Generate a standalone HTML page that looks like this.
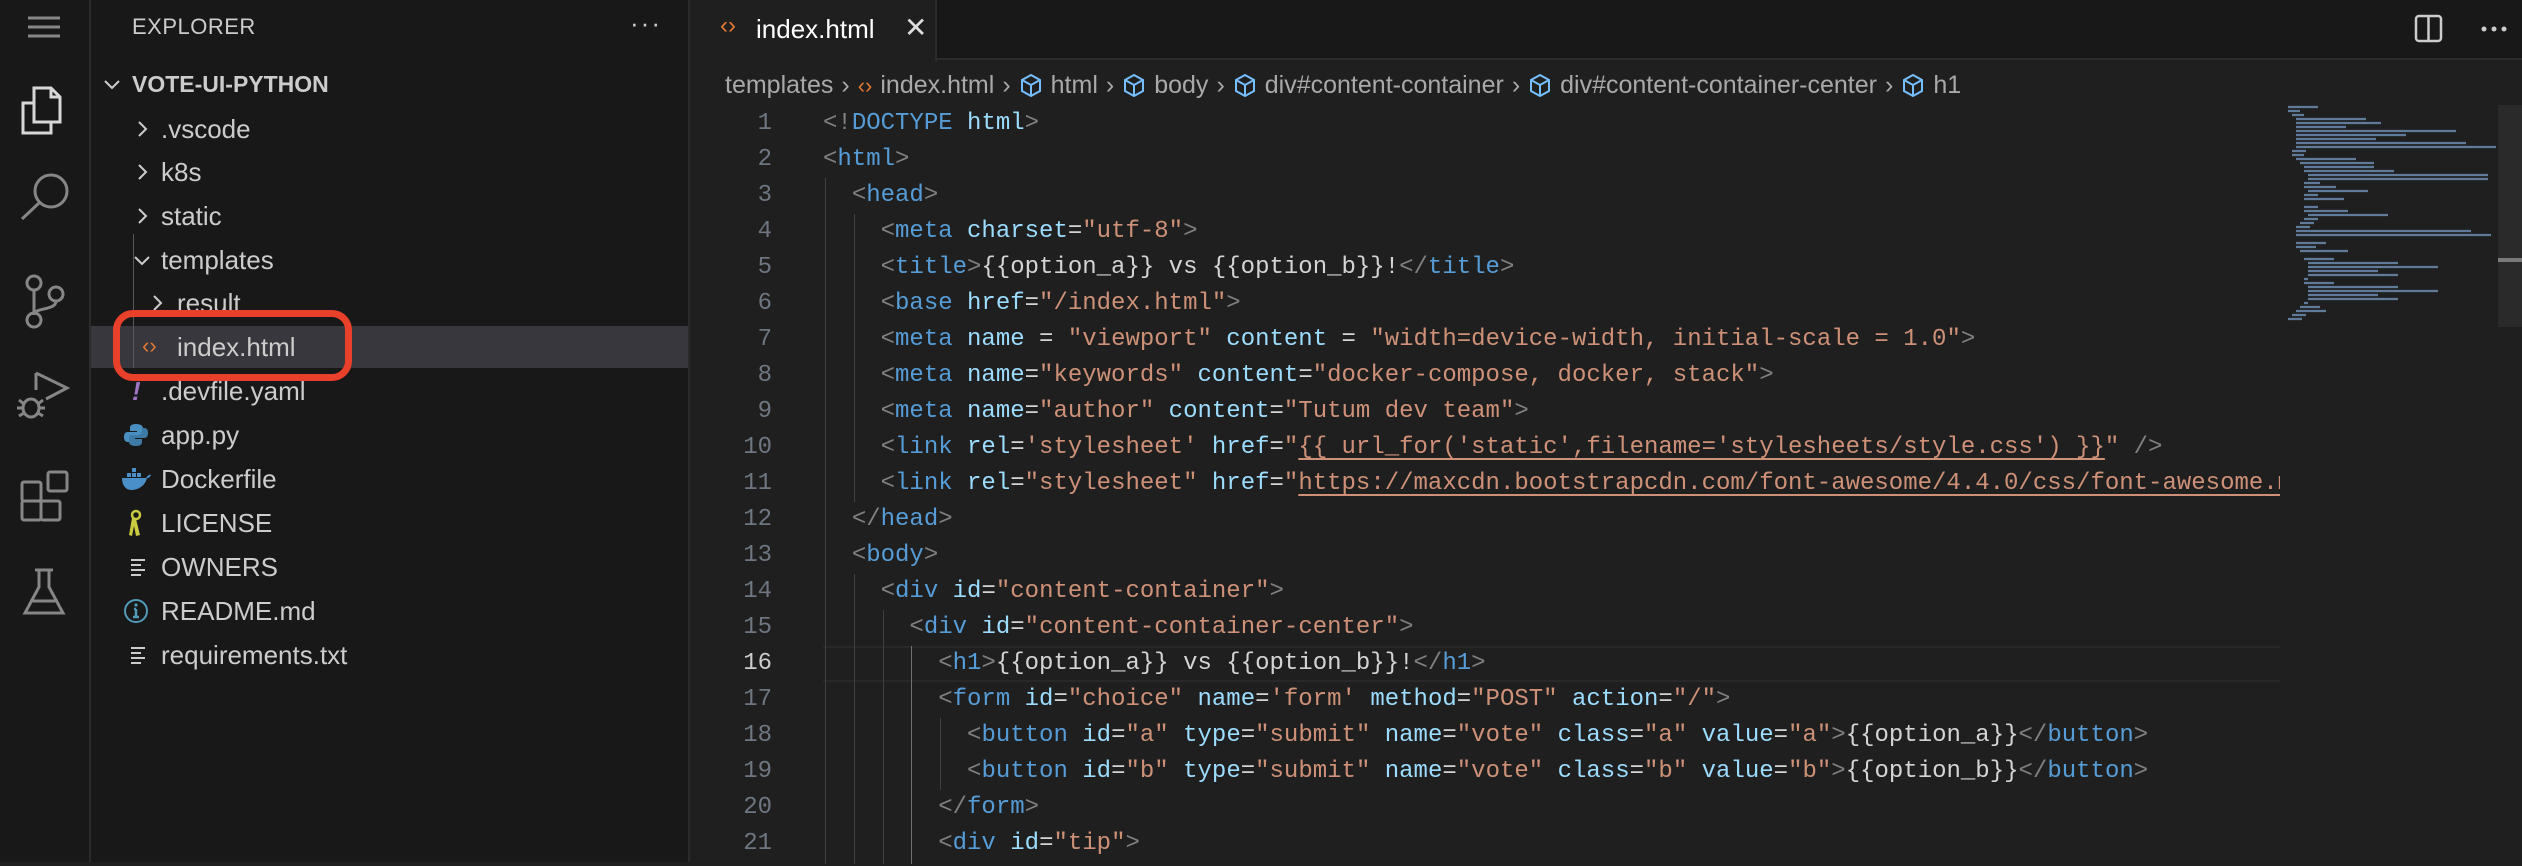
<!DOCTYPE html>
<html><head><meta charset="utf-8">
<style>
*{margin:0;padding:0;box-sizing:border-box}
body{width:2522px;height:862px;overflow:hidden;background:#1f1f1f;font-family:"Liberation Sans",sans-serif;position:relative}
.abs{position:absolute}
#act{left:0;top:0;width:91px;height:862px;background:#181818;border-right:2px solid #2b2b2b}
#side{left:91px;top:0;width:599px;height:862px;background:#181818;border-right:2px solid #2b2b2b}
.row{position:absolute;left:0;width:597px;height:44px;line-height:44px;font-size:26px;color:#cccccc;white-space:nowrap}
.row .t{position:absolute}
.chev{position:absolute;top:12px;width:20px;height:20px}
#tabs{left:692px;top:0;width:1830px;height:60px;background:#181818;border-bottom:2px solid #2b2b2b}
#tab{left:692px;top:0;width:245px;height:62px;background:#1f1f1f;border-right:2px solid #2b2b2b}
#code{left:823px;top:106px;width:1457px;height:760px;overflow:hidden;font-family:"Liberation Mono",monospace;font-size:24px;line-height:36px;white-space:pre;color:#d4d4d4}
#nums{left:700px;top:106px;width:72px;font-family:"Liberation Mono",monospace;font-size:24px;line-height:36px;text-align:right;color:#6e7681}
.p{color:#808080}.n{color:#569cd6}.a{color:#9cdcfe}.s{color:#ce9178}.u{text-decoration:underline;text-underline-offset:5px}
.g{position:absolute;width:1px;background:#404040}
</style></head><body>
<div class="abs" id="act">
<svg width="91" height="640" viewBox="0 0 91 640" fill="none" stroke="#868686" stroke-width="3">
<path d="M28 18h32M28 27h32M28 36h32"/>
<g stroke="#d7d7d7"><path d="M34 88h17l9 9v25h-26z"/><path d="M51 88v9h9"/><path d="M34 103h-11v30h28v-11"/></g>
<circle cx="51" cy="191" r="16"/><path d="M39 203l-17 16"/>
<circle cx="34" cy="283" r="7"/><circle cx="34" cy="320" r="7"/><circle cx="56" cy="294" r="7"/><path d="M34 290v23M56 301c0 10-22 6-22 14"/>
<path d="M36 373l31 15-21 11M36 373v17"/><ellipse cx="31" cy="408" rx="8" ry="9"/><path d="M19 400l5 4M19 416l5-3M43 400l-5 4M43 416l-5-3M17 408h6M39 408h6"/>
<rect x="22" y="482" width="19" height="19" rx="2"/><rect x="22" y="501" width="19" height="19" rx="2"/><rect x="41" y="501" width="19" height="19" rx="2"/><rect x="48" y="472" width="19" height="19" rx="2"/>
<path d="M35 570h18M39 570v17l-14 26h38l-14-26v-17M30 601h28"/>
</svg>
</div>
<div class="abs" id="side">
<div class="abs" style="left:41px;top:14px;font-size:22px;color:#cccccc;letter-spacing:0.5px">EXPLORER</div>
<div class="abs" style="left:539px;top:8px;font-size:26px;color:#ccc;letter-spacing:2px">···</div>
<div class="row" style="top:62px;font-weight:bold;font-size:23px"><svg class="chev" style="left:11px" viewBox="0 0 20 20"><path d="M3 7l7 7 7-7" stroke="#ccc" stroke-width="2" fill="none"/></svg><span class="t" style="left:41px">VOTE-UI-PYTHON</span></div>
<div class="row" style="top:107px"><svg class="chev" style="left:41px" viewBox="0 0 20 20"><path d="M7 3l7 7-7 7" stroke="#ccc" stroke-width="2" fill="none"/></svg><span class="t" style="left:70px">.vscode</span></div>
<div class="row" style="top:150px"><svg class="chev" style="left:41px" viewBox="0 0 20 20"><path d="M7 3l7 7-7 7" stroke="#ccc" stroke-width="2" fill="none"/></svg><span class="t" style="left:70px">k8s</span></div>
<div class="row" style="top:194px"><svg class="chev" style="left:41px" viewBox="0 0 20 20"><path d="M7 3l7 7-7 7" stroke="#ccc" stroke-width="2" fill="none"/></svg><span class="t" style="left:70px">static</span></div>
<div class="row" style="top:238px"><svg class="chev" style="left:41px" viewBox="0 0 20 20"><path d="M3 7l7 7 7-7" stroke="#ccc" stroke-width="2" fill="none"/></svg><span class="t" style="left:70px">templates</span></div>
<div class="row" style="top:281px"><svg class="chev" style="left:56px" viewBox="0 0 20 20"><path d="M7 3l7 7-7 7" stroke="#ccc" stroke-width="2" fill="none"/></svg><span class="t" style="left:86px">result</span></div>
<div class="row" style="top:326px;background:#37373d;height:42px;line-height:42px"><span class="t" style="left:51px;color:#e37933;font-size:22px;top:-1px">‹›</span><span class="t" style="left:86px">index.html</span></div>
<div class="abs" style="left:42px;top:234px;width:1px;height:134px;background:#585858"></div>
<div class="row" style="top:369px"><span class="t" style="left:41px;color:#a074c4;font-style:italic;font-weight:bold">!</span><span class="t" style="left:70px">.devfile.yaml</span></div>
<div class="row" style="top:413px"><svg class="t" style="left:33px;top:10px" width="24" height="24" viewBox="0 0 24 24"><path d="M12 1c-5 0-6 2-6 4v3h7v1H4c-3 0-4 2-4 5s1 5 4 5h2v-3c0-2 2-4 4-4h6c2 0 3-1 3-3V5c0-2-2-4-7-4z" fill="#4a8fc1"/><path d="M12 23c5 0 6-2 6-4v-3h-7v-1h9c3 0 4-2 4-5s-1-5-4-5h-2v3c0 2-2 4-4 4H8c-2 0-3 1-3 3v4c0 2 2 4 7 4z" fill="#3d7aa6"/></svg><span class="t" style="left:70px">app.py</span></div>
<div class="row" style="top:457px"><svg class="t" style="left:30px;top:10px" width="30" height="24" viewBox="0 0 30 24"><path d="M1 11h24c2-3 4-4 5-3-1 2-2 3-4 3-2 8-9 12-16 12C4 23 1 17 1 11z" fill="#4b8fc9"/><rect x="6" y="6" width="4" height="4" fill="#4b8fc9"/><rect x="11" y="6" width="4" height="4" fill="#4b8fc9"/><rect x="16" y="6" width="4" height="4" fill="#4b8fc9"/><rect x="11" y="1" width="4" height="4" fill="#4b8fc9"/></svg><span class="t" style="left:70px">Dockerfile</span></div>
<div class="row" style="top:501px"><svg class="t" style="left:36px;top:8px" width="18" height="28" viewBox="0 0 18 28"><circle cx="9" cy="6" r="4" stroke="#cbcb41" stroke-width="2.5" fill="none"/><path d="M5 9l-3 17 3 1 2-10 2 10 4-1-4-16" fill="#cbcb41"/></svg><span class="t" style="left:70px">LICENSE</span></div>
<div class="row" style="top:545px"><svg class="t" style="left:40px;top:13px" width="16" height="18"><path d="M0 2h14M0 7h10M0 12h14M0 17h10" stroke="#ccc" stroke-width="2"/></svg><span class="t" style="left:70px">OWNERS</span></div>
<div class="row" style="top:589px"><svg class="t" style="left:32px;top:9px" width="26" height="26"><circle cx="13" cy="13" r="11" stroke="#519aba" stroke-width="2" fill="none"/><path d="M13 11v8M10 19h6M11 11h2" stroke="#519aba" stroke-width="2.5"/><circle cx="13" cy="7" r="1.6" fill="#519aba"/></svg><span class="t" style="left:70px">README.md</span></div>
<div class="row" style="top:633px"><svg class="t" style="left:40px;top:13px" width="16" height="18"><path d="M0 2h14M0 7h10M0 12h14M0 17h10" stroke="#ccc" stroke-width="2"/></svg><span class="t" style="left:70px">requirements.txt</span></div>
</div>
<div class="abs" style="left:113px;top:310px;width:239px;height:71px;border:7px solid #e8402a;border-radius:20px"></div>

<div class="abs" id="tabs"></div>
<div class="abs" id="tab">
<span class="abs" style="left:28px;top:12px;color:#e37933;font-size:24px">‹›</span>
<span class="abs" style="left:64px;top:14px;color:#ffffff;font-size:26px">index.html</span>
<span class="abs" style="left:212px;top:11px;color:#ddd;font-size:28px">✕</span>
</div>
<svg class="abs" style="left:2414px;top:14px" width="100" height="30"><rect x="2" y="2" width="25" height="25" rx="3" stroke="#ccc" stroke-width="2.5" fill="none"/><path d="M14.5 2v25" stroke="#ccc" stroke-width="2.5"/><circle cx="70" cy="15" r="2.5" fill="#ccc"/><circle cx="80" cy="15" r="2.5" fill="#ccc"/><circle cx="90" cy="15" r="2.5" fill="#ccc"/></svg>

<div class="abs" style="left:725px;top:71px;font-size:25px;color:#a9a9a9;white-space:nowrap;display:flex;align-items:center;gap:8px">
<span>templates</span><span class="c">›</span><span style="color:#e37933;font-size:22px">‹›</span><span>index.html</span><span>›</span>
<svg width="24" height="26" viewBox="0 0 24 26"><path d="M12 2l9 5v11l-9 5-9-5V7zM3 7l9 5 9-5M12 12v11" stroke="#75beff" stroke-width="2" fill="none"/></svg><span>html</span><span>›</span>
<svg width="24" height="26" viewBox="0 0 24 26"><path d="M12 2l9 5v11l-9 5-9-5V7zM3 7l9 5 9-5M12 12v11" stroke="#75beff" stroke-width="2" fill="none"/></svg><span>body</span><span>›</span>
<svg width="24" height="26" viewBox="0 0 24 26"><path d="M12 2l9 5v11l-9 5-9-5V7zM3 7l9 5 9-5M12 12v11" stroke="#75beff" stroke-width="2" fill="none"/></svg><span>div#content-container</span><span>›</span>
<svg width="24" height="26" viewBox="0 0 24 26"><path d="M12 2l9 5v11l-9 5-9-5V7zM3 7l9 5 9-5M12 12v11" stroke="#75beff" stroke-width="2" fill="none"/></svg><span>div#content-container-center</span><span>›</span>
<svg width="24" height="26" viewBox="0 0 24 26"><path d="M12 2l9 5v11l-9 5-9-5V7zM3 7l9 5 9-5M12 12v11" stroke="#75beff" stroke-width="2" fill="none"/></svg><span>h1</span>
</div>

<div class="abs" style="left:823px;top:646px;width:1457px;height:36px;border-top:2px solid #282828;border-bottom:2px solid #282828"></div>
<div class="abs" id="nums">1<br>2<br>3<br>4<br>5<br>6<br>7<br>8<br>9<br>10<br>11<br>12<br>13<br>14<br>15<br><span style="color:#cccccc">16</span><br>17<br>18<br>19<br>20<br>21</div>

<div class="g" style="left:825px;top:178px;height:686px"></div>
<div class="g" style="left:854px;top:214px;height:288px"></div>
<div class="g" style="left:854px;top:574px;height:290px"></div>
<div class="g" style="left:883px;top:610px;height:254px"></div>
<div class="g" style="left:911px;top:646px;height:218px;background:#707070"></div>
<div class="g" style="left:940px;top:718px;height:72px"></div>

<div class="abs" id="code"><span class="p">&lt;!</span><span class="n">DOCTYPE</span> <span class="a">html</span><span class="p">&gt;</span>
<span class="p">&lt;</span><span class="n">html</span><span class="p">&gt;</span>
  <span class="p">&lt;</span><span class="n">head</span><span class="p">&gt;</span>
    <span class="p">&lt;</span><span class="n">meta</span> <span class="a">charset</span>=<span class="s">"utf-8"</span><span class="p">&gt;</span>
    <span class="p">&lt;</span><span class="n">title</span><span class="p">&gt;</span>{{option_a}} vs {{option_b}}!<span class="p">&lt;/</span><span class="n">title</span><span class="p">&gt;</span>
    <span class="p">&lt;</span><span class="n">base</span> <span class="a">href</span>=<span class="s">"/index.html"</span><span class="p">&gt;</span>
    <span class="p">&lt;</span><span class="n">meta</span> <span class="a">name</span> = <span class="s">"viewport"</span> <span class="a">content</span> = <span class="s">"width=device-width, initial-scale = 1.0"</span><span class="p">&gt;</span>
    <span class="p">&lt;</span><span class="n">meta</span> <span class="a">name</span>=<span class="s">"keywords"</span> <span class="a">content</span>=<span class="s">"docker-compose, docker, stack"</span><span class="p">&gt;</span>
    <span class="p">&lt;</span><span class="n">meta</span> <span class="a">name</span>=<span class="s">"author"</span> <span class="a">content</span>=<span class="s">"Tutum dev team"</span><span class="p">&gt;</span>
    <span class="p">&lt;</span><span class="n">link</span> <span class="a">rel</span>=<span class="s">'stylesheet'</span> <span class="a">href</span>=<span class="s">"<span class="u">{{ url_for('static',filename='stylesheets/style.css') }}</span>"</span> <span class="p">/&gt;</span>
    <span class="p">&lt;</span><span class="n">link</span> <span class="a">rel</span>=<span class="s">"stylesheet"</span> <span class="a">href</span>=<span class="s">"<span class="u">https://maxcdn.bootstrapcdn.com/font-awesome/4.4.0/css/font-awesome.min.css</span>"</span><span class="p">&gt;</span>
  <span class="p">&lt;/</span><span class="n">head</span><span class="p">&gt;</span>
  <span class="p">&lt;</span><span class="n">body</span><span class="p">&gt;</span>
    <span class="p">&lt;</span><span class="n">div</span> <span class="a">id</span>=<span class="s">"content-container"</span><span class="p">&gt;</span>
      <span class="p">&lt;</span><span class="n">div</span> <span class="a">id</span>=<span class="s">"content-container-center"</span><span class="p">&gt;</span>
        <span class="p">&lt;</span><span class="n">h1</span><span class="p">&gt;</span>{{option_a}} vs {{option_b}}!<span class="p">&lt;/</span><span class="n">h1</span><span class="p">&gt;</span>
        <span class="p">&lt;</span><span class="n">form</span> <span class="a">id</span>=<span class="s">"choice"</span> <span class="a">name</span>=<span class="s">'form'</span> <span class="a">method</span>=<span class="s">"POST"</span> <span class="a">action</span>=<span class="s">"/"</span><span class="p">&gt;</span>
          <span class="p">&lt;</span><span class="n">button</span> <span class="a">id</span>=<span class="s">"a"</span> <span class="a">type</span>=<span class="s">"submit"</span> <span class="a">name</span>=<span class="s">"vote"</span> <span class="a">class</span>=<span class="s">"a"</span> <span class="a">value</span>=<span class="s">"a"</span><span class="p">&gt;</span>{{option_a}}<span class="p">&lt;/</span><span class="n">button</span><span class="p">&gt;</span>
          <span class="p">&lt;</span><span class="n">button</span> <span class="a">id</span>=<span class="s">"b"</span> <span class="a">type</span>=<span class="s">"submit"</span> <span class="a">name</span>=<span class="s">"vote"</span> <span class="a">class</span>=<span class="s">"b"</span> <span class="a">value</span>=<span class="s">"b"</span><span class="p">&gt;</span>{{option_b}}<span class="p">&lt;/</span><span class="n">button</span><span class="p">&gt;</span>
        <span class="p">&lt;/</span><span class="n">form</span><span class="p">&gt;</span>
        <span class="p">&lt;</span><span class="n">div</span> <span class="a">id</span>=<span class="s">"tip"</span><span class="p">&gt;</span></div>

<svg class="abs" style="left:2284px;top:100px" width="238" height="240">
<g stroke-width="2.2" opacity="0.8">
<path d="M4 7h30M4 11h12M8 15h12M12 19h70M12 23h85M12 27h50M12 31h160M12 35h110M12 39h80M12 43h170M12 47h200M8 51h14M8 55h12M12 59h60M16 63h74M20 67h70M20 71h90M24 75h180M24 79h180M20 83h16M20 87h32M24 91h60M20 95h14M20 99h40M20 107h14M20 111h44M24 115h80M20 119h14M16 123h14M12 127h14M12 131h175M12 135h195M12 143h30M12 147h20M16 151h48M20 159h30M24 163h90M24 167h130M24 171h70M24 175h90M20 179h4M20 183h30M24 187h90M24 191h130M24 195h70M24 199h90M20 203h4M16 207h20M12 211h30M8 215h14M4 219h14" stroke="#6f93b8"/>
</g>
<rect x="214" y="5" width="24" height="222" fill="#2a2a2a"/>
<rect x="214" y="158" width="24" height="4" fill="#7a7a7a"/>
</svg>
</body></html>
